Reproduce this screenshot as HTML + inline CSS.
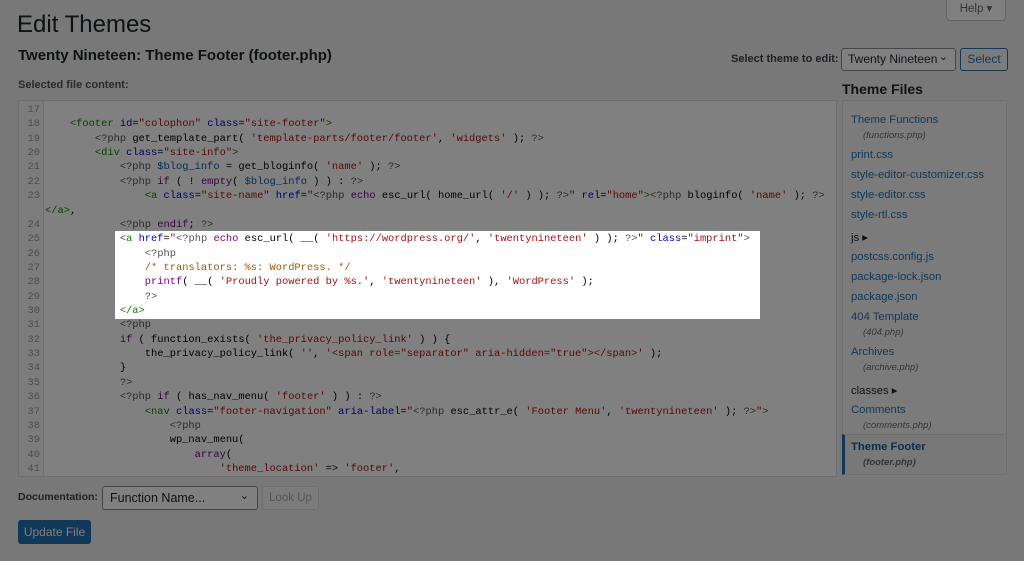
<!DOCTYPE html>
<html><head><meta charset="utf-8"><style>
*{margin:0;padding:0;box-sizing:border-box}
body{width:1024px;height:561px;overflow:hidden;background:#787878;font-family:"Liberation Sans",sans-serif;color:#0f1214;position:relative}
.a{position:absolute;white-space:nowrap}
.ed{position:absolute;left:18px;top:100px;width:819px;height:377px;background:#808080;border:1px solid #6e6e6f;overflow:hidden}
.gut{position:absolute;left:0;top:0;width:25px;height:100%;background:#7c7c7c;border-right:1px solid #6e6e6e}
.ln{position:absolute;left:0;width:22px;text-align:right;font:10.4px/14.36px "Liberation Mono",monospace;color:#4c4c4c}
.cl{position:absolute;font:10.4px/14.36px "Liberation Mono",monospace;white-space:pre;color:#000}
.t{color:#0b3c00}.at{color:#000066}.s{color:#550808}.k{color:#380044}.c{color:#552800}.m{color:#2a2a2a}.v{color:#002a55}
.hi .t{color:#170}.hi .at{color:#00c}.hi .s{color:#a11}.hi .k{color:#708}.hi .c{color:#a50}.hi .m{color:#555}.hi .v{color:#05a}
.side{position:absolute;left:842px;top:100px;width:165px;height:375px;border:1px solid #6e6e6f;background:#7b7b7b}
.f{position:absolute;left:851px;font-size:11.3px;color:#113858;white-space:nowrap}
.fi{position:absolute;left:863px;font-size:9.5px;font-style:italic;color:#323538;white-space:nowrap}
.hl{position:absolute;left:115px;top:231px;width:645px;height:88px;background:#fff}
</style></head><body>
<div class="a" style="left:17px;top:11px;font-size:24px;font-weight:400">Edit Themes</div>
<div class="a" style="left:18px;top:47px;font-size:15px;font-weight:700">Twenty Nineteen: Theme Footer (footer.php)</div>
<div class="a" style="left:18px;top:79px;font-size:11px;font-weight:700;color:#282b2f">Selected file content:</div>
<div class="a" style="left:946px;top:-4px;width:60px;height:25px;border:1px solid #616263;border-top:none;background:#808080;border-radius:0 0 4px 4px;font-size:11.5px;color:#323538;text-align:center;line-height:26px">Help ▾</div>
<div class="a" style="left:731px;top:53px;font-size:11px;font-weight:700;color:#1e2125">Select theme to edit:</div>
<div class="a" style="left:841px;top:48px;width:115px;height:23px;border:1px solid #46474a;border-radius:3px;background:#808080;font-size:12px;line-height:21px;padding-left:6px">Twenty Nineteen <span style="position:absolute;right:7px;top:-2px;font-size:11px">⌄</span></div>
<div class="a" style="left:960px;top:48px;width:48px;height:23px;border:1px solid #113858;border-radius:3px;background:#7b7b7b;color:#113858;font-size:12px;line-height:21px;text-align:center">Select</div>
<div class="a" style="left:842px;top:81px;font-size:14px;font-weight:700">Theme Files</div>

<div class="ed"><div class="gut"></div></div>
<div id="code"></div>

<div class="side"></div>
<div class="f" style="top:114px">Theme Functions</div><div class="fi" style="top:130px">(functions.php)</div>
<div class="f" style="top:149px">print.css</div>
<div class="f" style="top:169px">style-editor-customizer.css</div>
<div class="f" style="top:189px">style-editor.css</div>
<div class="f" style="top:209px">style-rtl.css</div>
<div class="f" style="top:231px;color:#0f1214">js ▸</div>
<div class="f" style="top:251px">postcss.config.js</div>
<div class="f" style="top:271px">package-lock.json</div>
<div class="f" style="top:291px">package.json</div>
<div class="f" style="top:311px">404 Template</div><div class="fi" style="top:327px">(404.php)</div>
<div class="f" style="top:346px">Archives</div><div class="fi" style="top:362px">(archive.php)</div>
<div class="f" style="top:384px;color:#0f1214">classes ▸</div>
<div class="f" style="top:404px">Comments</div><div class="fi" style="top:420px">(comments.php)</div>
<div class="a" style="left:842px;top:434px;width:165px;height:41px;background:#787878;border-left:3px solid #113858;border-top:1px solid #6e6e6f;border-right:1px solid #6e6e6f;border-bottom:1px solid #6e6e6f"></div>
<div class="f" style="top:441px;font-weight:700;color:#0a2f4b">Theme Footer</div><div class="fi" style="top:457px;font-weight:700">(footer.php)</div>

<div class="a" style="left:18px;top:491px;font-size:10.5px;font-weight:700;color:#1e2125">Documentation:</div>
<div class="a" style="left:102px;top:486px;width:156px;height:24px;border:1px solid #46474a;border-radius:3px;background:#808080;font-size:12.5px;line-height:22px;padding-left:7px">Function Name... <span style="position:absolute;right:8px;top:-2px;font-size:11px">⌄</span></div>
<div class="a" style="left:262px;top:486px;width:57px;height:24px;border:1px solid #6e6e6f;border-radius:3px;background:#7b7b7b;color:#535556;font-size:11.5px;line-height:22px;text-align:center">Look Up</div>
<div class="a" style="left:18px;top:520px;width:73px;height:24px;border-radius:3px;background:#113858;color:#808080;font-size:12px;line-height:24px;text-align:center">Update File</div>

<div class="hl"></div>
<div id="code2" class="hi"></div>

<script>
var L=[
[17,''],
[18,'    <span class=t>&lt;footer</span> <span class=at>id</span>=<span class=s>"colophon"</span> <span class=at>class</span>=<span class=s>"site-footer"</span><span class=t>&gt;</span>'],
[19,'        <span class=m>&lt;?php</span> get_template_part( <span class=s>\'template-parts/footer/footer\'</span>, <span class=s>\'widgets\'</span> ); <span class=m>?&gt;</span>'],
[20,'        <span class=t>&lt;div</span> <span class=at>class</span>=<span class=s>"site-info"</span><span class=t>&gt;</span>'],
[21,'            <span class=m>&lt;?php</span> <span class=v>$blog_info</span> = get_bloginfo( <span class=s>\'name\'</span> ); <span class=m>?&gt;</span>'],
[22,'            <span class=m>&lt;?php</span> <span class=k>if</span> ( ! <span class=k>empty</span>( <span class=v>$blog_info</span> ) ) : <span class=m>?&gt;</span>'],
[23,'                <span class=t>&lt;a</span> <span class=at>class</span>=<span class=s>"site-name"</span> <span class=at>href</span>=<span class=s>"</span><span class=m>&lt;?php</span> <span class=k>echo</span> esc_url( home_url( <span class=s>\'/\'</span> ) ); <span class=m>?&gt;</span><span class=s>"</span> <span class=at>rel</span>=<span class=s>"home"</span><span class=t>&gt;</span><span class=m>&lt;?php</span> bloginfo( <span class=s>\'name\'</span> ); <span class=m>?&gt;</span>'],
['','<span class=t>&lt;/a&gt;</span>,'],
[24,'            <span class=m>&lt;?php</span> <span class=k>endif</span>; <span class=m>?&gt;</span>'],
[25,'            <span class=t>&lt;a</span> <span class=at>href</span>=<span class=s>"</span><span class=m>&lt;?php</span> <span class=k>echo</span> esc_url( __( <span class=s>\'https://wordpress.org/\'</span>, <span class=s>\'twentynineteen\'</span> ) ); <span class=m>?&gt;</span><span class=s>"</span> <span class=at>class</span>=<span class=s>"imprint"</span><span class=t>&gt;</span>'],
[26,'                <span class=m>&lt;?php</span>'],
[27,'                <span class=c>/* translators: %s: WordPress. */</span>'],
[28,'                <span class=k>printf</span>( __( <span class=s>\'Proudly powered by %s.\'</span>, <span class=s>\'twentynineteen\'</span> ), <span class=s>\'WordPress\'</span> );'],
[29,'                <span class=m>?&gt;</span>'],
[30,'            <span class=t>&lt;/a&gt;</span>'],
[31,'            <span class=m>&lt;?php</span>'],
[32,'            <span class=k>if</span> ( function_exists( <span class=s>\'the_privacy_policy_link\'</span> ) ) {'],
[33,'                the_privacy_policy_link( <span class=s>\'\'</span>, <span class=s>\'&lt;span role="separator" aria-hidden="true"&gt;&lt;/span&gt;\'</span> );'],
[34,'            }'],
[35,'            <span class=m>?&gt;</span>'],
[36,'            <span class=m>&lt;?php</span> <span class=k>if</span> ( has_nav_menu( <span class=s>\'footer\'</span> ) ) : <span class=m>?&gt;</span>'],
[37,'                <span class=t>&lt;nav</span> <span class=at>class</span>=<span class=s>"footer-navigation"</span> <span class=at>aria-label</span>=<span class=s>"</span><span class=m>&lt;?php</span> esc_attr_e( <span class=s>\'Footer Menu\'</span>, <span class=s>\'twentynineteen\'</span> ); <span class=m>?&gt;</span><span class=s>"</span><span class=t>&gt;</span>'],
[38,'                    <span class=m>&lt;?php</span>'],
[39,'                    wp_nav_menu('],
[40,'                        <span class=k>array</span>('],
[41,'                            <span class=s>\'theme_location\'</span> =&gt; <span class=s>\'footer\'</span>,']
];
var h='',h2='';
for(var i=0;i<L.length;i++){var y=103+i*14.36;
if(i>=9&&i<=14){h2+='<div class=cl style="left:45px;top:'+y+'px">'+L[i][1]+'</div>';h+='<div class=ln style="left:18px;top:'+y+'px">'+L[i][0]+'</div>';}
else h+='<div class=ln style="left:18px;top:'+y+'px">'+L[i][0]+'</div><div class=cl style="left:45px;top:'+y+'px">'+L[i][1]+'</div>';}
document.getElementById('code').innerHTML=h;
document.getElementById('code2').innerHTML=h2;
</script>
</body></html>
